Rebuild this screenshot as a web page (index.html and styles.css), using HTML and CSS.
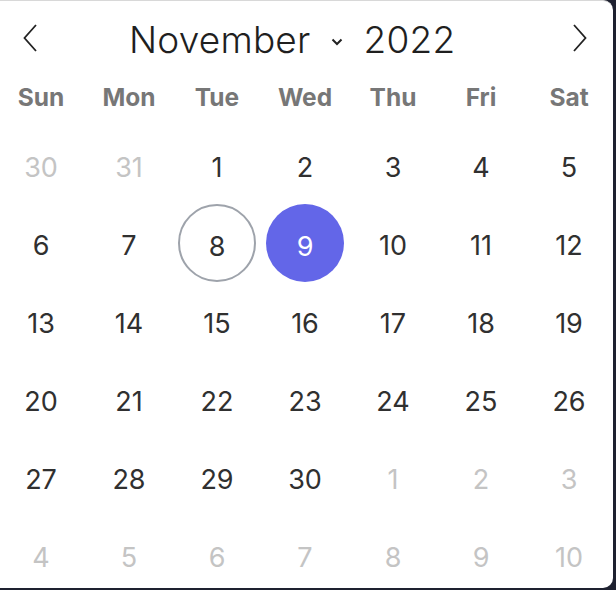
FILE: index.html
```html
<!doctype html>
<html>
<head>
<meta charset="utf-8">
<title>Calendar</title>
<link rel="stylesheet" href="styles.css">
</head>
<body>
<div class="calendar">
  <div class="head">
    <a href="javascript:;" class="nav">
      <svg width="14" height="28" viewBox="0 0 14 28"><path d="M13 1 L1.5 14 L13 27" fill="none" stroke="#222" stroke-width="1.8"/></svg>
    </a>
    <div class="title">
      <span class="month">November</span>
      <svg class="caret" width="14" height="8" viewBox="0 0 14 8"><path d="M2.5 1.5 L7 6 L11.5 1.5" fill="none" stroke="#222" stroke-width="2"/></svg>
      <span class="year">2022</span>
    </div>
    <a href="javascript:;" class="nav next">
      <svg width="14" height="28" viewBox="0 0 14 28"><path d="M1 1 L12.5 14 L1 27" fill="none" stroke="#222" stroke-width="1.8"/></svg>
    </a>
  </div>
  <ul class="week">
    <li>Sun</li><li>Mon</li><li>Tue</li><li>Wed</li><li>Thu</li><li>Fri</li><li>Sat</li>
  </ul>
  <ul class="days">
    <li class="other">30</li><li class="other">31</li><li>1</li><li>2</li><li>3</li><li>4</li><li>5</li>
    <li>6</li><li>7</li><li><span class="today">8</span></li><li><span class="picked">9</span></li><li>10</li><li>11</li><li>12</li>
    <li>13</li><li>14</li><li>15</li><li>16</li><li>17</li><li>18</li><li>19</li>
    <li>20</li><li>21</li><li>22</li><li>23</li><li>24</li><li>25</li><li>26</li>
    <li>27</li><li>28</li><li>29</li><li>30</li><li class="other">1</li><li class="other">2</li><li class="other">3</li>
    <li class="other">4</li><li class="other">5</li><li class="other">6</li><li class="other">7</li><li class="other">8</li><li class="other">9</li><li class="other">10</li>
  </ul>
</div>
</body>
</html>
```
FILE: styles.css
```css
*{margin:0;padding:0;box-sizing:border-box}
body{background:#1e2130;font-family:Inter,"Noto Sans",sans-serif;width:616px;height:590px;overflow:hidden}
.calendar{width:616px;height:588px;margin-left:-3px;background:#fff;border-top:1px solid #d8d8d8;border-radius:0 10px 10px 0;}
.head{display:flex;align-items:center;height:77px;padding:0 26px 0 26px}
.nav{display:flex;align-items:center;text-decoration:none;margin-top:-4px}
.nav.next{margin-left:auto}
.title{display:flex;align-items:center;font-size:37px;font-weight:300;color:#1f1f1f;letter-spacing:0.2px;margin-left:92px}
.caret{margin:4px 20px 0 19px}
.week{display:grid;grid-template-columns:repeat(7,88px);list-style:none;height:40px}
.week li{text-align:center;font-size:24.5px;font-weight:700;color:#777;line-height:38px}
.days{display:grid;grid-template-columns:repeat(7,88px);grid-auto-rows:78px;list-style:none;margin-top:10px}
.days li{display:flex;align-items:center;justify-content:center;font-size:27px;color:#303030}
.days .other{color:#c4c4c4}
.days span{display:flex;align-items:center;justify-content:center;width:78px;height:78px;border-radius:50%;padding-top:6px;margin-bottom:4px}
.days .today{border:2px solid #9ea3ab}
.days .picked{background:#6366e8;color:#fff}
```
